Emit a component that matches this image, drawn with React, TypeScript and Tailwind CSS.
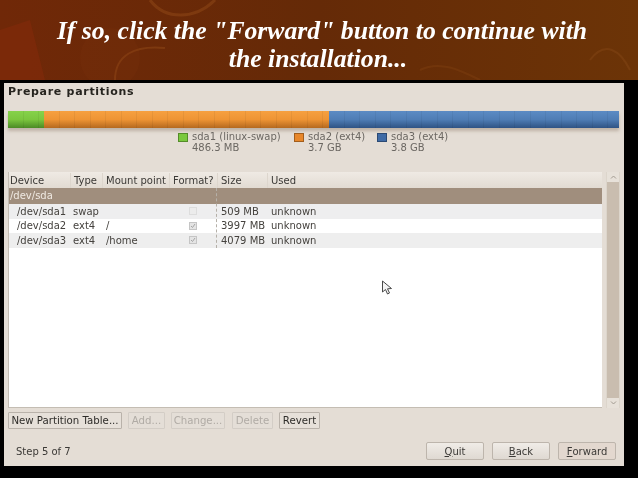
const font = { fontFamily: '"DejaVu Sans", sans-serif' };

const rows = [
  { d: "/dev/sda1", t: "swap", m: "", s: "509 MB", bg: "bg-[#eeeeef]", check: false },
  { d: "/dev/sda2", t: "ext4", m: "/", s: "3997 MB", bg: "bg-white", check: true },
  { d: "/dev/sda3", t: "ext4", m: "/home", s: "4079 MB", bg: "bg-[#eeeeee]", check: true },
];

function Seg({ w, c }: { w: string; c: string }) {
  const ticks = Array.from({ length: 30 });
  return (
    <div className={`${w} ${c} h-full flex overflow-hidden`}>
      {ticks.map((_, i) => (
        <div key={i} className="w-[15.5px] shrink-0 h-full border-r border-black/5" />
      ))}
    </div>
  );
}

function Legend({ c, a, b }: { c: string; a: string; b: string }) {
  return (
    <div className="flex gap-[4px]">
      <div className={`w-[10px] h-[9px] mt-[2px] border border-black/30 ${c}`} />
      <div className="text-[#6b6762] text-[10px] leading-[11px]">
        <div>{a}</div>
        <div>{b}</div>
      </div>
    </div>
  );
}

function Btn({ label, dim, w }: { label: string; dim?: boolean; w: string }) {
  return (
    <div
      className={`${w} h-[17px] flex items-center justify-center text-[10.2px] rounded-[1px] border ${
        dim ? "text-[#b0aba5] border-[#d3cdc6] bg-[#e4ded7]" : "text-[#2e2c29] border-[#b9b2aa] bg-[#e6e0d9]"
      }`}
    >
      {label}
    </div>
  );
}

function BigBtn({ k, rest, strong }: { k: string; rest: string; strong?: boolean }) {
  return (
    <div
      className={`w-[58px] h-[18px] flex items-center justify-center text-[10px] text-[#3b3936] rounded-[2px] border border-[#bdb5ac] ${
        strong ? "bg-[#e3d8cf]" : "bg-gradient-to-b from-[#f0ece7] to-[#dfd9d2]"
      }`}
    >
      <span className="underline">{k}</span>
      {rest}
    </div>
  );
}

const colClass = ["w-[61px] pl-[1px]", "w-[32px] pl-[3px] border-l border-[#ddd6cd]", "w-[67px] pl-[3px] border-l border-[#ddd6cd]", "w-[48px] pl-[3px] border-l border-[#ddd6cd]", "w-[50px] pl-[3px] border-l border-[#ddd6cd]"];

export default function App() {
  return (
    <div className="w-[638px] h-[478px] bg-black overflow-hidden flex flex-col" style={font}>
      <div className="relative h-[80px] shrink-0 overflow-hidden bg-gradient-to-r from-[#702808] via-[#652a07] to-[#6c3407]">
        <svg className="absolute inset-0" width="638" height="80" fill="none">
          <path d="M0 30 L30 20 L45 80 L0 80Z" fill="#8a2a0a" opacity="0.45" />
          <path d="M150 0 C165 20 195 20 215 0" stroke="#a4591f" strokeWidth="3" opacity="0.35" />
          <path d="M115 80 C115 55 135 45 165 48" stroke="#a4591f" strokeWidth="2" opacity="0.35" />
          <circle cx="110" cy="58" r="30" fill="#8f3a10" opacity="0.12" />
          <path d="M590 60 C605 40 620 50 630 70" stroke="#8a4a18" strokeWidth="2" opacity="0.4" />
          <path d="M420 70 C440 60 460 70 480 80" stroke="#8a4a18" strokeWidth="2" opacity="0.3" />
        </svg>
        <div
          className="relative pt-[17px] text-center text-white text-[25.7px] leading-[28px] font-bold italic blur-[0.3px]"
          style={{ fontFamily: '"Liberation Serif", serif' }}
        >
          <div className="pl-[6px]">If so, click the "Forward" button to continue with</div>
          <div className="pr-[2px]">the installation...</div>
        </div>
      </div>

      <div className="ml-[4px] mt-[3px] w-[620px] h-[383px] bg-[#e4ddd5] flex flex-col px-[4px] blur-[0.3px]">
        <div className="font-bold text-[#26241f] text-[11px] leading-[12px] tracking-[0.7px] mt-[3px]">Prepare partitions</div>
        <div className="flex h-[17px] mt-[13px] w-[611px] shadow-[0_3px_3px_rgba(120,100,80,0.35)]">
          <Seg w="w-[36px]" c="bg-gradient-to-b from-[#86d24a] via-[#7bc63e] to-[#4b8a25]" />
          <Seg w="w-[285px]" c="bg-gradient-to-b from-[#f6a040] via-[#ee9434] to-[#b5691f]" />
          <Seg w="w-[290px]" c="bg-gradient-to-b from-[#5c8bc4] via-[#4f7db5] to-[#2f5384]" />
        </div>
        <div className="flex ml-[170px] mt-[3px]">
          <div className="w-[116px]"><Legend c="bg-[#7ac93d]" a="sda1 (linux-swap)" b="486.3 MB" /></div>
          <div className="w-[83px]"><Legend c="bg-[#e8872a]" a="sda2 (ext4)" b="3.7 GB" /></div>
          <Legend c="bg-[#3f6ba6]" a="sda3 (ext4)" b="3.8 GB" />
        </div>

        <div className="flex mt-[19px] h-[236px]">
          <div className="w-[594px] flex flex-col bg-white border-b border-l border-[#c4bdb3]">
            <div className="flex h-[16px] items-center text-[10px] text-[#3b3936] bg-gradient-to-b from-[#efeae4] to-[#e2dbd2] shrink-0">
              {["Device", "Type", "Mount point", "Format?", "Size"].map((h, i) => (
                <div key={h} className={colClass[i]}>{h}</div>
              ))}
              <div className="pl-[3px] border-l border-[#ddd6cd]">Used</div>
            </div>
            <div className="h-[16px] bg-[#a08e7d] text-[#efe9e2] text-[10px] leading-[15px] pl-[1px] shrink-0">/dev/sda</div>
            <div className="relative shrink-0">
              <div className="absolute left-[207px] top-[-16px] bottom-0 border-l border-dashed border-[#b5b0a8]" />
              {rows.map((r) => (
                <div key={r.d} className={`flex items-center h-[14.5px] text-[10px] text-[#45423e] ${r.bg}`}>
                  <div className="w-[61px] pl-[8px]">{r.d}</div>
                  <div className="w-[32px] pl-[3px]">{r.t}</div>
                  <div className="w-[67px] pl-[4px]">{r.m}</div>
                  <div className="w-[48px] pl-[20px]">
                    <div className={`w-[8px] h-[8px] border flex items-center justify-center ${r.check ? "border-[#c5c5c5] bg-[#e4e4e4]" : "border-[#dddddd] bg-[#ececec]"}`}>
                      {r.check && (
                        <svg width="6" height="6" viewBox="0 0 6 6">
                          <path d="M1 3 L2.5 4.5 L5 1" stroke="#a5a5a5" strokeWidth="1" fill="none" />
                        </svg>
                      )}
                    </div>
                  </div>
                  <div className="w-[50px] pl-[4px]">{r.s}</div>
                  <div className="pl-[4px]">unknown</div>
                </div>
              ))}
            </div>
            <div className="relative flex-1">
              <svg className="absolute left-[372px] top-[32px]" width="12" height="16" viewBox="0 0 12 16">
                <path d="M1.5 1 L1.5 12 L4.5 9.5 L6.5 14 L8.5 13 L6.5 8.8 L10.5 8.5 Z" fill="#f4f4f4" stroke="#4a4a4a" strokeWidth="1" />
              </svg>
            </div>
          </div>
          <div className="ml-[4px] w-[14px] bg-[#c9bdaf] border-x border-[#dcd5cb] flex flex-col justify-between">
            <div className="h-[10px] bg-[#e7e1d9] flex items-center justify-center">
              <svg width="7" height="4"><path d="M1 3.5 L3.5 1 L6 3.5" stroke="#a29b91" fill="none" /></svg>
            </div>
            <div className="h-[10px] bg-[#e7e1d9] flex items-center justify-center">
              <svg width="7" height="4"><path d="M1 .5 L3.5 3 L6 .5" stroke="#a29b91" fill="none" /></svg>
            </div>
          </div>
        </div>

        <div className="flex mt-[4px]">
          <Btn label="New Partition Table..." w="w-[114px]" />
          <div className="ml-[6px]"><Btn label="Add..." dim w="w-[37px]" /></div>
          <div className="ml-[6px]"><Btn label="Change..." dim w="w-[54px]" /></div>
          <div className="ml-[7px]"><Btn label="Delete" dim w="w-[41px]" /></div>
          <div className="ml-[6px]"><Btn label="Revert" w="w-[41px]" /></div>
        </div>

        <div className="flex items-center justify-between mt-[13px] pr-[4px]">
          <div className="text-[10px] text-[#3b3936] ml-[8px]">Step 5 of 7</div>
          <div className="flex gap-[8px]">
            <BigBtn k="Q" rest="uit" />
            <BigBtn k="B" rest="ack" />
            <BigBtn k="F" rest="orward" strong />
          </div>
        </div>
      </div>
    </div>
  );
}
